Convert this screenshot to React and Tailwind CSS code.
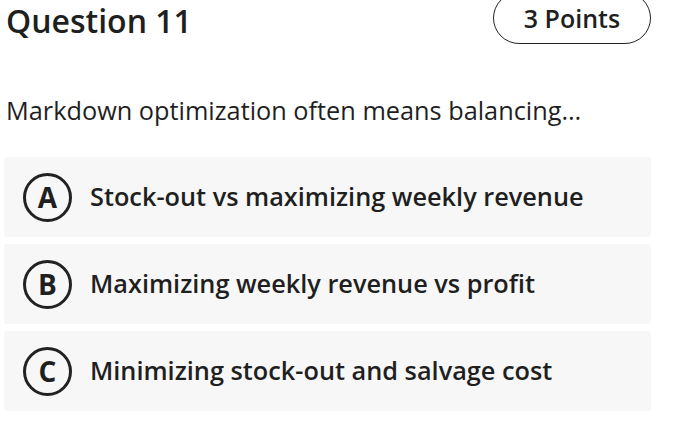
import React from "react";

const options = [
  { letter: "A", text: "Stock-out vs maximizing weekly revenue" },
  { letter: "B", text: "Maximizing weekly revenue vs profit" },
  { letter: "C", text: "Minimizing stock-out and salvage cost" },
];

function App() {
  return (
    <div
      className="w-[700px] h-[441px] overflow-hidden bg-white text-[#1f1f1f]"
      style={{ fontFamily: '"Open Sans", sans-serif' }}
    >
      <div className="ml-[4px] w-[647px]">
        <div className="flex items-start justify-between">
          <h1 className="pl-[2px] pt-[2px] text-[32px] leading-[38px] font-semibold">
            Question 11
          </h1>
          <div className="-mt-[8px] h-[52px] w-[158px] rounded-full border-[1.5px] border-[#222] flex items-center justify-center pt-[0px]">
            <span className="text-[25px] font-semibold leading-none">3 Points</span>
          </div>
        </div>

        <p className="mt-[49px] pl-[2px] text-[25.3px] leading-[34px]">
          Markdown optimization often means balancing…
        </p>

        <div className="mt-[30px] flex flex-col gap-[7px]">
          {options.map((o) => (
            <div
              key={o.letter}
              className="h-[80px] rounded-[3px] bg-[#f7f7f7] flex items-center pl-[19px]"
            >
              <div className="w-[49px] h-[49px] rounded-full border-[3px] border-[#222] flex items-center justify-center shrink-0">
                <span className="text-[28px] font-bold leading-none">{o.letter}</span>
              </div>
              <span className="ml-[18px] text-[25.3px] font-semibold">{o.text}</span>
            </div>
          ))}
        </div>
      </div>
    </div>
  );
}

export default App;
